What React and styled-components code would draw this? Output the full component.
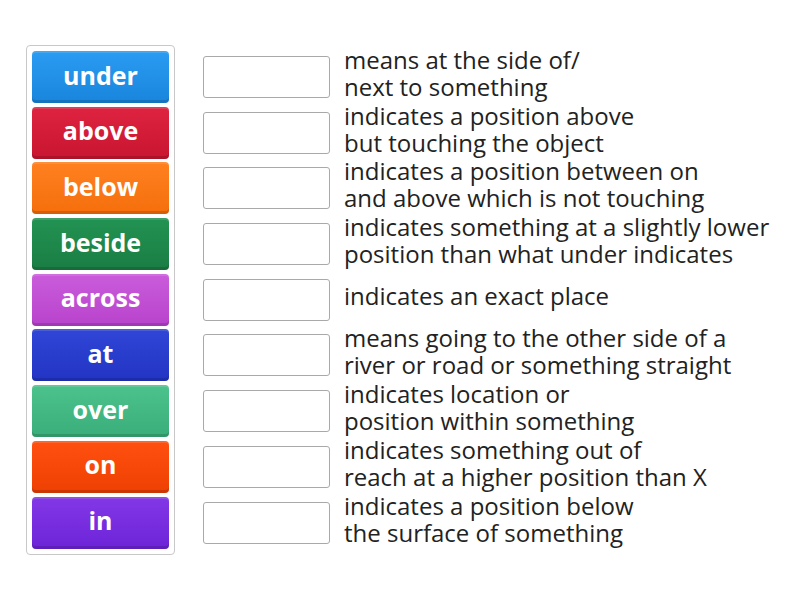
import React from 'react'
import styled, { createGlobalStyle } from 'styled-components'

const GlobalStyle = createGlobalStyle`
  html, body {
    margin: 0;
    padding: 0;
    background: #ffffff;
  }
  body {
    font-family: "Open Sans", "Noto Sans", sans-serif;
  }
`

const words = [
  { label: 'under', top: '#2a9cf2', bottom: '#1985dc' },
  { label: 'above', top: '#de2340', bottom: '#c81530' },
  { label: 'below', top: '#ff8020', bottom: '#f56f0c' },
  { label: 'beside', top: '#229353', bottom: '#1a7d43' },
  { label: 'across', top: '#ca5ddb', bottom: '#b843cc' },
  { label: 'at', top: '#3046d6', bottom: '#2234c4' },
  { label: 'over', top: '#4cc28c', bottom: '#3aae7a' },
  { label: 'on', top: '#ff5010', bottom: '#ee4002' },
  { label: 'in', top: '#8338e6', bottom: '#6d24d8' },
]

const definitions = [
  ['means at the side of/', 'next to something'],
  ['indicates a position above', 'but touching the object'],
  ['indicates a position between on', 'and above which is not touching'],
  ['indicates something at a slightly lower', 'position than what under indicates'],
  ['indicates an exact place'],
  ['means going to the other side of a', 'river or road or something straight'],
  ['indicates location or', 'position within something'],
  ['indicates something out of', 'reach at a higher position than X'],
  ['indicates a position below', 'the surface of something'],
]

const Page = styled.div`
  display: flex;
  align-items: flex-start;
  gap: 28px;
  padding: 45px 0 0 26px;
  width: 800px;
  height: 600px;
  box-sizing: border-box;
`

const WordPanel = styled.div`
  display: flex;
  flex-direction: column;
  gap: 3.7px;
  padding: 5px;
  border: 1px solid #c8c8c8;
  border-radius: 4px;
`

const WordButton = styled.div`
  width: 137px;
  height: 52px;
  display: flex;
  align-items: center;
  justify-content: center;
  box-sizing: border-box;
  border-radius: 4px;
  color: #ffffff;
  font-size: 25px;
  font-weight: 700;
  padding-bottom: 5px;
  background: linear-gradient(${(p) => p.$top}, ${(p) => p.$bottom});
  box-shadow: inset 0 -3px 0 rgba(0, 0, 0, 0.14), inset 0 2px 0 rgba(255, 255, 255, 0.12);
`

const Rows = styled.div`
  display: flex;
  flex-direction: column;
  gap: 3.7px;
  padding-top: 6px;
`

const Row = styled.div`
  display: flex;
  align-items: center;
  height: 52px;
  gap: 14px;
`

const Slot = styled.div`
  width: 127px;
  height: 42px;
  flex-shrink: 0;
  box-sizing: border-box;
  border: 1px solid #a9a9a9;
  border-radius: 3px;
  background: #ffffff;
`

const Definition = styled.div`
  font-size: 24px;
  line-height: 27px;
  color: #222222;
  white-space: pre;
  padding-bottom: 8px;
`

export default function App() {
  return (
    <>
      <GlobalStyle />
      <Page>
        <WordPanel>
          {words.map((w) => (
            <WordButton key={w.label} $top={w.top} $bottom={w.bottom}>
              {w.label}
            </WordButton>
          ))}
        </WordPanel>
        <Rows>
          {definitions.map((lines, i) => (
            <Row key={i}>
              <Slot />
              <Definition>{lines.join('\n')}</Definition>
            </Row>
          ))}
        </Rows>
      </Page>
    </>
  )
}
